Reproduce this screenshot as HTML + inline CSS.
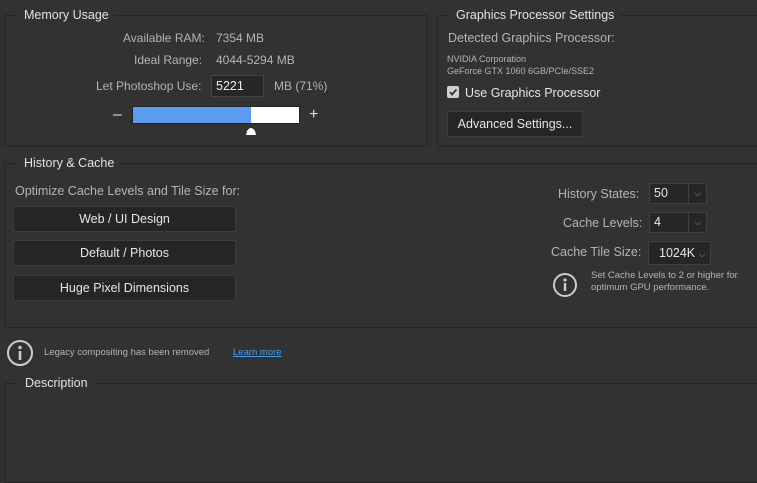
<!DOCTYPE html><html><head><style>
body{margin:0;width:757px;height:454px;background:#323232;font-family:"Liberation Sans",sans-serif;font-size:12px;color:#b4b4b4;position:relative;overflow:hidden}
.a{position:absolute;white-space:nowrap}
.fs{position:absolute;border:1px solid #262626;box-sizing:border-box}
.lg{position:absolute;background:#323232;color:#e2e2e2;padding:0 6px;font-size:12.5px;line-height:14px}
.btn{position:absolute;background:#252525;border:1px solid #3c3c3c;border-radius:2px;box-sizing:border-box;color:#e6e6e6;text-align:center;font-size:12.5px}
.dd{position:absolute;background:#262626;border:1px solid #404040;border-radius:2px;box-sizing:border-box;color:#e6e6e6;font-size:12.5px}
.dd .s{position:absolute;right:0;top:0;bottom:0;width:17px;border-left:1px solid #404040;color:#9a9a9a;font-size:9px;text-align:center}
</style></head><body>
<div class="fs" style="left:4px;top:15px;width:424px;height:132px"></div>
<div class="lg" style="left:18px;top:8px">Memory Usage</div>
<div class="a" style="left:123px;top:31px">Available RAM:</div>
<div class="a" style="left:216px;top:31px">7354 MB</div>
<div class="a" style="left:134px;top:53px">Ideal Range:</div>
<div class="a" style="left:216px;top:53px">4044-5294 MB</div>
<div class="a" style="left:96px;top:79px">Let Photoshop Use:</div>
<div class="a" style="left:211px;top:75px;width:53px;height:22px;background:#262626;border:1px solid #444;box-sizing:border-box;color:#eee;padding:3px 4px;font-size:12.5px">5221</div>
<div class="a" style="left:274px;top:79px">MB (71%)</div>
<div class="a" style="left:113px;top:106px;color:#ddd;font-size:16px;line-height:18px">–</div>
<div class="a" style="left:132px;top:106px;width:168px;height:18px;background:#fff;border:1px solid #222;box-sizing:border-box"><div style="width:118px;height:16px;background:#5b9bf0"></div></div>
<svg class="a" style="left:245px;top:126px" width="12" height="10"><path d="M1 9 L2 5 Q6 -1 10 5 L11 9Z" fill="#fff"/></svg>
<div class="a" style="left:309px;top:106px;color:#ddd;font-size:16px;line-height:18px">+</div>

<div class="fs" style="left:437px;top:15px;width:330px;height:132px"></div>
<div class="lg" style="left:450px;top:8px">Graphics Processor Settings</div>
<div class="a" style="left:448px;top:31px;font-size:12.5px">Detected Graphics Processor:</div>
<div class="a" style="left:447px;top:53px;font-size:9px;line-height:12px">NVIDIA Corporation<br>GeForce GTX 1060 6GB/PCIe/SSE2</div>
<div class="a" style="left:447px;top:86px;width:12px;height:12px;background:#d0d0d0;border-radius:2px"><svg width="12" height="12"><path d="M3 6 L5 8.5 L9.5 3.5" stroke="#333" stroke-width="1.8" fill="none"/></svg></div>
<div class="a" style="left:465px;top:86px;color:#e6e6e6;font-size:12.5px">Use Graphics Processor</div>
<div class="btn" style="left:447px;top:111px;width:136px;height:26px;line-height:24px">Advanced Settings...</div>

<div class="fs" style="left:4px;top:163px;width:770px;height:165px"></div>
<div class="lg" style="left:18px;top:156px">History &amp; Cache</div>
<div class="a" style="left:15px;top:184px;font-size:12.5px">Optimize Cache Levels and Tile Size for:</div>
<div class="btn" style="left:13px;top:206px;width:223px;height:26px;line-height:24px">Web / UI Design</div>
<div class="btn" style="left:13px;top:240px;width:223px;height:26px;line-height:24px">Default / Photos</div>
<div class="btn" style="left:13px;top:275px;width:223px;height:26px;line-height:24px">Huge Pixel Dimensions</div>
<div class="a" style="left:558px;top:187px;font-size:12.5px">History States:</div>
<div class="dd" style="left:649px;top:183px;width:58px;height:21px;line-height:19px;padding-left:4px">50<div class="s">⌵</div></div>
<div class="a" style="left:563px;top:216px;font-size:12.5px">Cache Levels:</div>
<div class="dd" style="left:649px;top:212px;width:58px;height:21px;line-height:19px;padding-left:4px">4<div class="s">⌵</div></div>
<div class="a" style="left:551px;top:245px;font-size:12.5px">Cache Tile Size:</div>
<div class="dd" style="left:648px;top:241px;width:63px;height:24px;line-height:22px;padding-left:10px">1024K <span style="color:#9a9a9a;font-size:9px">⌵</span></div>
<svg class="a" style="left:552px;top:272px" width="26" height="26"><circle cx="13" cy="13" r="11" stroke="#ccc" stroke-width="2" fill="none"/><circle cx="13" cy="8" r="1.6" fill="#ccc"/><rect x="11.8" y="11" width="2.4" height="8" fill="#ccc"/></svg>
<div class="a" style="left:591px;top:270px;font-size:9.5px;line-height:12px">Set Cache Levels to 2 or higher for<br>optimum GPU performance.</div>

<svg class="a" style="left:6px;top:339px" width="28" height="28"><circle cx="14" cy="14" r="12" stroke="#ccc" stroke-width="2" fill="none"/><circle cx="14" cy="8.5" r="1.7" fill="#ccc"/><rect x="12.7" y="12" width="2.6" height="9" fill="#ccc"/></svg>
<div class="a" style="left:44px;top:347px;font-size:9.5px">Legacy compositing has been removed</div>
<div class="a" style="left:233px;top:347px;font-size:9.5px;color:#4a9be8;text-decoration:underline">Learn more</div>

<div class="fs" style="left:4px;top:383px;width:770px;height:100px"></div>
<div class="lg" style="left:19px;top:376px">Description</div>
</body></html>
